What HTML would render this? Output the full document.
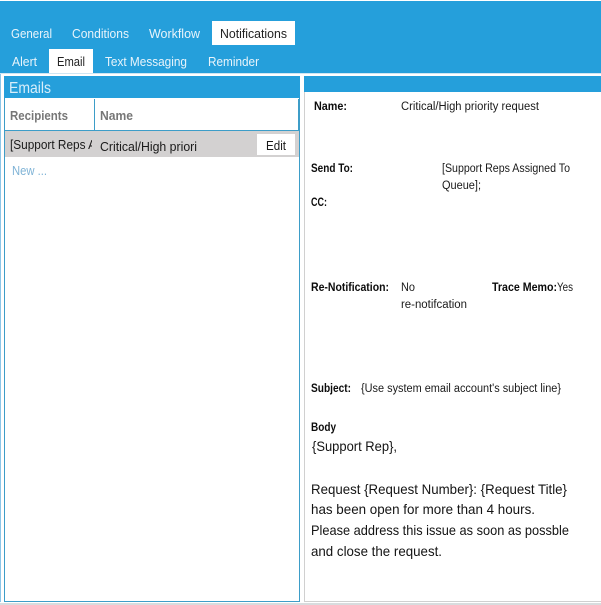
<!DOCTYPE html>
<html><head><meta charset="utf-8"><style>
html,body{margin:0;padding:0;background:#fff;width:601px;height:605px;overflow:hidden}
svg{display:block;position:absolute;left:0;top:0}
text{font-family:"Liberation Sans",sans-serif;font-size:12.5px;fill:#1a1a1a}
.n{font-size:13px;fill:#e8f4fb}
.b{font-weight:bold;font-size:11.5px;fill:#0c0c0c}
.s{font-size:11.5px;fill:#1a1a1a}
.l{font-size:14px;fill:#141414}
</style></head><body>
<svg width="601" height="605" viewBox="0 0 601 605" xmlns="http://www.w3.org/2000/svg">
<rect width="601" height="605" fill="#fff"/>
<rect x="0" y="1" width="601" height="72" fill="#259fdb"/>
<rect x="0" y="73" width="601" height="1" fill="#cfe6f3"/>
<rect x="0" y="74" width="1" height="528" fill="#8cc6e8"/>
<rect x="212" y="21" width="83" height="24" fill="#fff"/>
<rect x="49" y="49" width="44" height="24" fill="#fff"/>
<text class="n" x="11" y="38" textLength="41" lengthAdjust="spacingAndGlyphs">General</text>
<text class="n" x="72" y="38" textLength="57" lengthAdjust="spacingAndGlyphs">Conditions</text>
<text class="n" x="149" y="38" textLength="51" lengthAdjust="spacingAndGlyphs">Workflow</text>
<text class="n" x="220" y="38" textLength="67" lengthAdjust="spacingAndGlyphs" style="fill:#222">Notifications</text>
<text class="n" x="12" y="66" textLength="25" lengthAdjust="spacingAndGlyphs">Alert</text>
<text class="n" x="57" y="66" textLength="28" lengthAdjust="spacingAndGlyphs" style="fill:#222">Email</text>
<text class="n" x="105" y="66" textLength="82" lengthAdjust="spacingAndGlyphs">Text Messaging</text>
<text class="n" x="208" y="66" textLength="51" lengthAdjust="spacingAndGlyphs">Reminder</text>
<rect x="4.5" y="76.5" width="295" height="525" fill="#fff" stroke="#3d9dc8"/>
<rect x="4" y="76" width="296" height="22" fill="#259fdb"/>
<text x="9" y="93" textLength="42" lengthAdjust="spacingAndGlyphs" style="font-size:16px;fill:#d8eefa">Emails</text>
<rect x="94" y="99" width="1" height="31" fill="#3d9dc8"/>
<rect x="5" y="130" width="294" height="1" fill="#3d9dc8"/>
<rect x="298" y="99" width="1" height="31" fill="#3d9dc8"/>
<text x="10" y="120" textLength="58" lengthAdjust="spacingAndGlyphs" style="font-weight:bold;fill:#777">Recipients</text>
<text x="100" y="120" textLength="33" lengthAdjust="spacingAndGlyphs" style="font-weight:bold;fill:#777">Name</text>
<rect x="5" y="131" width="294" height="26" fill="#d3d1d1"/>
<svg x="0" y="131" width="92" height="26"><text x="10" y="18" textLength="86" lengthAdjust="spacingAndGlyphs">[Support Reps A</text></svg>
<text x="100" y="151" textLength="97" lengthAdjust="spacingAndGlyphs">Critical/High priori</text>
<rect x="257" y="134" width="38" height="21" fill="#fff"/>
<text x="266" y="150" textLength="20" lengthAdjust="spacingAndGlyphs">Edit</text>
<text x="12" y="175" textLength="35" lengthAdjust="spacingAndGlyphs" style="fill:#7fb3d6">New ...</text>
<rect x="304.5" y="76.5" width="297" height="525" fill="#fff" stroke="#d0d0d0"/>
<rect x="304" y="76" width="297" height="16" fill="#259fdb"/>
<rect x="0" y="603" width="601" height="2" fill="#d8dcde"/>
<text class="b" x="314" y="110" textLength="33" lengthAdjust="spacingAndGlyphs">Name:</text>
<text class="s" x="401" y="110" textLength="138" lengthAdjust="spacingAndGlyphs">Critical/High priority request</text>
<text class="b" x="311" y="172" textLength="42" lengthAdjust="spacingAndGlyphs">Send To:</text>
<text class="s" x="442" y="172" textLength="128" lengthAdjust="spacingAndGlyphs">[Support Reps Assigned To</text>
<text class="s" x="442" y="189" textLength="39" lengthAdjust="spacingAndGlyphs">Queue];</text>
<text class="b" x="311" y="206" textLength="16" lengthAdjust="spacingAndGlyphs">CC:</text>
<text class="b" x="311" y="291" textLength="78" lengthAdjust="spacingAndGlyphs">Re-Notification:</text>
<text class="s" x="401" y="291" textLength="14" lengthAdjust="spacingAndGlyphs">No</text>
<text class="s" x="401" y="308" textLength="66" lengthAdjust="spacingAndGlyphs">re-notifcation</text>
<text class="b" x="492" y="291" textLength="65" lengthAdjust="spacingAndGlyphs">Trace Memo:</text>
<text class="s" x="557" y="291" textLength="16" lengthAdjust="spacingAndGlyphs">Yes</text>
<text class="b" x="311" y="392" textLength="40" lengthAdjust="spacingAndGlyphs">Subject:</text>
<text class="s" x="361" y="392" textLength="200" lengthAdjust="spacingAndGlyphs">{Use system email account's subject line}</text>
<text class="b" x="311" y="431" textLength="25" lengthAdjust="spacingAndGlyphs">Body</text>
<text class="l" x="312" y="451" textLength="85" lengthAdjust="spacingAndGlyphs">{Support Rep},</text>
<text class="l" x="311" y="494" textLength="256" lengthAdjust="spacingAndGlyphs">Request {Request Number}: {Request Title}</text>
<text class="l" x="311" y="514" textLength="224" lengthAdjust="spacingAndGlyphs">has been open for more than 4 hours.</text>
<text class="l" x="311" y="535" textLength="258" lengthAdjust="spacingAndGlyphs">Please address this issue as soon as possble</text>
<text class="l" x="311" y="556" textLength="131" lengthAdjust="spacingAndGlyphs">and close the request.</text>
</svg>
</body></html>
